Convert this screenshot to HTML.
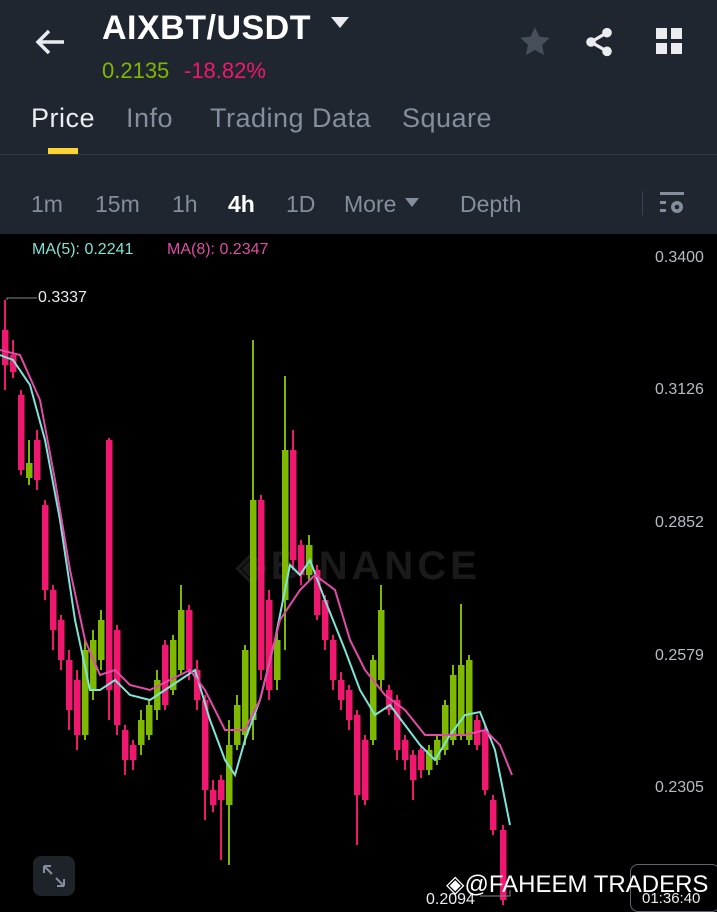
<!DOCTYPE html>
<html><head><meta charset="utf-8">
<style>
*{margin:0;padding:0;box-sizing:border-box}
body{width:717px;height:908px;overflow:hidden;background:#000;font-family:"Liberation Sans",sans-serif;position:relative}
#hdr{position:absolute;left:0;top:0;width:717px;height:234px;background:#1f2630}
.t{position:absolute;white-space:nowrap}
</style></head><body>
<div id="hdr">
<svg class="t" style="left:34px;top:28px" width="32" height="28" viewBox="0 0 32 28"><path d="M30 14H5M15 3L4 14l11 11" stroke="#eaecef" stroke-width="3.5" fill="none"/></svg>
<div class="t" style="left:102px;top:9px;font-size:34px;font-weight:bold;color:#fff;letter-spacing:0.5px">AIXBT/USDT</div>
<svg class="t" style="left:331px;top:17px" width="18" height="12"><path d="M0 0h18L9 11z" fill="#eaecef"/></svg>
<div class="t" style="left:102px;top:58px;font-size:22px;color:#7fb800">0.2135</div>
<div class="t" style="left:184px;top:58px;font-size:22px;color:#f0186e">-18.82%</div>
<svg class="t" style="left:518px;top:26px" width="34" height="32" viewBox="0 0 24 24"><path d="M12 1l3.3 7 7.7.9-5.7 5.3 1.5 7.6L12 18l-6.8 3.8 1.5-7.6L1 8.9 8.7 8z" fill="#474f5a"/></svg>
<svg class="t" style="left:583px;top:26px" width="32" height="32" viewBox="0 0 24 24"><circle cx="18" cy="5" r="3.6" fill="#eaecef"/><circle cx="6" cy="12" r="3.6" fill="#eaecef"/><circle cx="18" cy="19" r="3.6" fill="#eaecef"/><path d="M6 12L18 5M6 12l12 7" stroke="#eaecef" stroke-width="2.4"/></svg>
<svg class="t" style="left:656px;top:28px" width="28" height="28"><rect x="0" y="0" width="11" height="11" fill="#eaecef"/><rect x="15" y="0" width="11" height="11" fill="#eaecef"/><rect x="0" y="15" width="11" height="11" fill="#eaecef"/><rect x="15" y="15" width="11" height="11" fill="#eaecef"/></svg>
<div class="t" style="left:31px;top:103px;font-size:27px;color:#eaecef;letter-spacing:0.5px">Price</div>
<div class="t" style="left:126px;top:103px;font-size:27px;color:#848e9c;letter-spacing:0.5px">Info</div>
<div class="t" style="left:210px;top:103px;font-size:27px;color:#848e9c;letter-spacing:0.5px">Trading Data</div>
<div class="t" style="left:402px;top:103px;font-size:27px;color:#848e9c;letter-spacing:0.5px">Square</div>
<div class="t" style="left:48px;top:148px;width:30px;height:6px;background:#fcd535"></div>
<div class="t" style="left:0;top:154px;width:717px;height:1px;background:#343b46"></div>
<div class="t" style="left:31px;top:191px;font-size:23px;color:#848e9c">1m</div>
<div class="t" style="left:95px;top:191px;font-size:23px;color:#848e9c">15m</div>
<div class="t" style="left:172px;top:191px;font-size:23px;color:#848e9c">1h</div>
<div class="t" style="left:228px;top:191px;font-size:23px;color:#fff;font-weight:bold">4h</div>
<div class="t" style="left:286px;top:191px;font-size:23px;color:#848e9c">1D</div>
<div class="t" style="left:344px;top:191px;font-size:23px;color:#848e9c">More</div>
<svg class="t" style="left:405px;top:198px" width="14" height="10"><path d="M0 0h14L7 9z" fill="#848e9c"/></svg>
<div class="t" style="left:460px;top:191px;font-size:23px;color:#848e9c">Depth</div>
<div class="t" style="left:642px;top:191px;width:1px;height:24px;background:#3b424d"></div>
<svg class="t" style="left:660px;top:192px" width="26" height="24"><rect x="0" y="0" width="24" height="3" fill="#848e9c"/><rect x="0" y="9" width="6" height="3" fill="#848e9c"/><rect x="0" y="17" width="6" height="3" fill="#848e9c"/><circle cx="17" cy="15" r="6" fill="#848e9c"/><circle cx="17" cy="15" r="2.3" fill="#1f2630"/></svg>
</div>
<div class="t" style="left:32px;top:241px;font-size:16px;color:#7de5d8">MA(5): 0.2241</div>
<div class="t" style="left:167px;top:241px;font-size:16px;color:#e04ca8">MA(8): 0.2347</div>
<div class="t" style="left:655px;top:249px;font-size:16px;color:#b7bdc6">0.3400</div>
<div class="t" style="left:655px;top:381px;font-size:16px;color:#b7bdc6">0.3126</div>
<div class="t" style="left:655px;top:514px;font-size:16px;color:#b7bdc6">0.2852</div>
<div class="t" style="left:655px;top:647px;font-size:16px;color:#b7bdc6">0.2579</div>
<div class="t" style="left:655px;top:779px;font-size:16px;color:#b7bdc6">0.2305</div>
<div class="t" style="left:236px;top:543px;font-size:40px;font-weight:bold;color:#1a1a1a;letter-spacing:4px">◈BINANCE</div>
<svg id="ch" class="t" style="left:0;top:234px" width="717" height="674" viewBox="0 234 717 674"></svg>
<div class="t" style="left:38px;top:289px;font-size:16px;color:#eaecef">0.3337</div>
<div class="t" style="left:426px;top:891px;font-size:16px;color:#eaecef">0.2094</div>
<div class="t" style="left:33px;top:856px;width:42px;height:40px;border-radius:8px;background:#1e2329"></div>
<svg class="t" style="left:42px;top:864px" width="24" height="24"><path d="M2 2h7M2 2v7M2 2l8 8M22 22h-7M22 22v-7M22 22l-8-8" stroke="#848e9c" stroke-width="2" fill="none"/></svg>
<div class="t" style="left:630px;top:864px;width:90px;height:48px;border:1px solid #5e6673;border-radius:8px;background:#000"></div>
<div class="t" style="left:642px;top:890px;font-size:15px;color:#eaecef">01:36:40</div>
<div class="t" style="left:446px;top:870px;font-size:24px;color:#fff">◈@FAHEEM TRADERS</div>
<script>
var c=[[5,330,365,300,390,0],[13,355,372,340,378,0],[21,395,470,390,475,0],[29,463,478,440,485,1],[37,440,480,430,490,0],[45,505,590,500,600,0],[53,590,630,585,650,0],[61,620,660,615,670,0],[69,660,710,650,730,0],[77,680,735,670,750,0],[85,650,735,640,740,1],[93,640,690,630,700,1],[101,620,660,610,670,1],[109,440,690,438,720,0],[117,630,725,625,735,0],[125,730,760,725,775,0],[133,745,760,740,770,0],[141,720,745,710,755,1],[149,705,735,700,740,1],[157,680,710,670,720,1],[165,645,705,640,710,0],[173,640,690,635,695,1],[181,610,670,585,675,1],[189,610,670,605,680,0],[197,670,700,660,710,0],[205,700,790,695,820,0],[213,790,805,780,812,0],[221,780,800,775,860,0],[229,745,805,720,865,1],[237,705,745,695,750,1],[245,650,735,645,745,1],[253,500,720,340,740,1],[261,500,670,495,680,0],[269,600,690,590,700,0],[277,640,680,630,690,1],[285,450,600,376,650,1],[293,450,560,430,570,0],[301,545,575,540,585,0],[309,545,575,535,580,1],[317,570,615,565,620,0],[325,600,640,595,650,0],[333,640,680,635,690,0],[341,680,700,672,710,0],[349,690,720,685,730,0],[357,715,795,710,845,0],[365,740,800,735,805,0],[373,660,740,655,745,1],[381,610,680,585,690,1],[389,690,710,685,715,0],[397,700,750,695,760,0],[405,740,760,735,770,0],[413,755,780,750,800,0],[421,750,770,745,778,0],[429,750,770,745,775,1],[437,740,760,735,765,1],[445,705,750,700,755,1],[453,675,740,665,745,1],[461,665,735,604,740,1],[469,660,740,655,745,1],[477,720,745,715,750,0],[485,730,790,725,795,0],[493,800,830,795,835,0],[503,830,900,825,905,0]];
var s='';c.forEach(function(d){var col=d[5]?'#7fb800':'#f0186e';s+='<line x1="'+d[0]+'" x2="'+d[0]+'" y1="'+d[3]+'" y2="'+d[4]+'" stroke="'+col+'" stroke-width="2"/><rect x="'+(d[0]-3)+'" y="'+d[1]+'" width="6.5" height="'+(d[2]-d[1])+'" fill="'+col+'"/>';});
s+='<polyline fill="none" stroke="#7de5d8" stroke-width="2" points="0,355 13,360 30,385 45,440 60,520 75,620 90,690 100,690 115,680 130,695 150,700 165,690 180,680 195,670 210,720 225,760 235,775 245,740 260,700 275,640 290,565 300,575 310,560 325,600 345,650 360,690 375,715 390,705 405,725 420,745 435,760 450,735 465,715 480,712 495,750 510,825"/>';
s+='<polyline fill="none" stroke="#e04ca8" stroke-width="2" points="0,350 20,355 40,400 55,480 70,570 85,640 100,675 115,670 130,685 150,690 170,680 190,670 205,690 225,730 245,730 260,700 280,620 300,590 315,575 335,590 350,640 365,670 385,695 405,710 425,735 445,735 465,735 485,730 500,745 512,775"/>';
s+='<polyline fill="none" stroke="#888" stroke-width="1" points="7,300 7,298 37,298"/><polyline fill="none" stroke="#888" stroke-width="1" points="480,896 510,896 510,890"/>';
document.getElementById('ch').innerHTML=s;
</script>
</body></html>
